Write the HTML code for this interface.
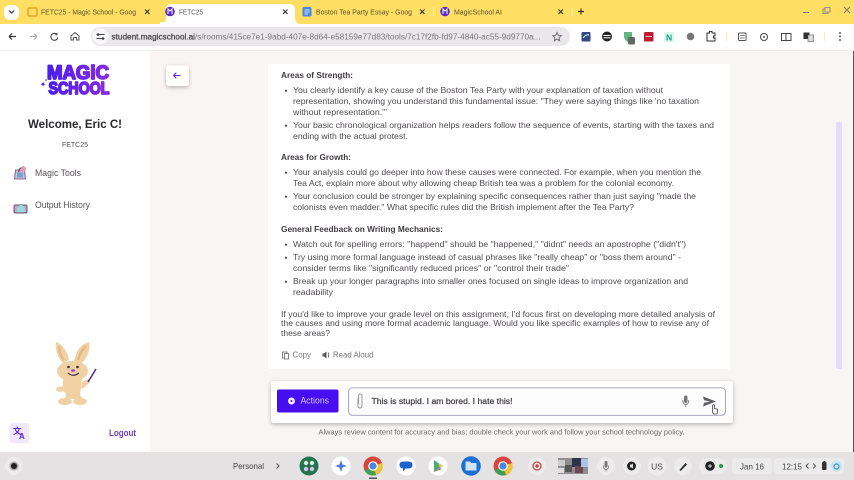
<!DOCTYPE html>
<html><head><meta charset="utf-8"><style>
html,body{margin:0;padding:0;width:854px;height:480px;overflow:hidden;background:#f9f5f4}
svg{position:absolute;left:0;top:0}
text{font-family:"Liberation Sans",sans-serif}
.b{font-size:8.6px;fill:#4f4b51}
.h{font-size:8.6px;font-weight:bold;fill:#3f3b41}
.t{font-size:7.4px;fill:#5a5030}
.u{font-size:8.6px;fill:#77757a}
</style></head><body>
<svg width="854" height="480" viewBox="0 0 854 480">
<defs>
<filter id="s" x="-10%" y="-30%" width="120%" height="170%"><feDropShadow dx="0" dy="1.5" stdDeviation="2" flood-color="#000" flood-opacity=".28"/></filter>
<filter id="bl"><feGaussianBlur stdDeviation=".35"/></filter>
<filter id="all" x="0" y="0" width="100%" height="100%"><feGaussianBlur stdDeviation=".28"/></filter>
<linearGradient id="lg" x1="0" y1="0" x2="1" y2="0"><stop offset="0" stop-color="#4a1df0"/><stop offset="1" stop-color="#8a2be2"/></linearGradient>
</defs>
<g filter="url(#all)">
<!-- page base -->
<rect width="854" height="480" fill="#f9f5f4"/>
<!-- tab strip -->
<rect width="854" height="24" fill="#fedf63"/>
<rect x="4" y="5" width="15" height="15" rx="6" fill="#fff"/>
<path d="M9 10.5l2.5 2.5 2.5-2.500" fill="none" stroke="#333" stroke-width="1.2"/>
<rect x="28" y="8" width="9" height="8" rx="1.5" fill="none" stroke="#e3a51e" stroke-width="1.5"/>
<text x="41" y="14.5" class="t" textLength="95" lengthAdjust="spacingAndGlyphs">FETC25 - Magic School - Goog</text>
<path d="M145 9.5l4.500 4.500m0-4.500l-4.500 4.500" stroke="#333" stroke-width="1.100"/>
<path d="M160 24q6 0 6-6v-8q0-6 6-6h117q6 0 6 6v8q0 6 6 6z" fill="#fff"/>
<circle cx="170" cy="11.500" r="4.800" fill="#5b2bc4"/>
<path d="M168 14v-5l2 2 2-2v5" fill="none" stroke="#fff" stroke-width="1"/>
<text x="179" y="14.500" class="t" textLength="24" lengthAdjust="spacingAndGlyphs" style="fill:#555">FETC25</text>
<path d="M283 9.500l4.500 4.500m0-4.500l-4.500 4.500" stroke="#333" stroke-width="1.100"/>
<rect x="302.500" y="7" width="9" height="9.500" rx="1.500" fill="#4b86e0"/>
<path d="M304.500 10h5M304.500 12h5M304.500 14h3.500" stroke="#fff" stroke-width=".8"/>
<text x="316" y="14.500" class="t" textLength="96" lengthAdjust="spacingAndGlyphs">Boston Tea Party Essay - Goog</text>
<path d="M420 9.500l4.500 4.500m0-4.500l-4.500 4.500" stroke="#333" stroke-width="1.100"/>
<rect x="433" y="7" width="1" height="9" fill="#fff3b0"/>
<circle cx="445" cy="11.500" r="4.800" fill="#5b2bc4"/>
<path d="M443 14v-5l2 2 2-2v5" fill="none" stroke="#fff" stroke-width="1"/>
<text x="454" y="14.500" class="t" textLength="48" lengthAdjust="spacingAndGlyphs">MagicSchool AI</text>
<path d="M558.500 9.500l4.500 4.500m0-4.500l-4.500 4.500" stroke="#333" stroke-width="1.100"/>
<rect x="572" y="7" width="1" height="9" fill="#fff3b0"/>
<path d="M581 8.500v6M578 11.500h6" stroke="#333" stroke-width="1.200"/>
<path d="M803 12.500h6" stroke="#777" stroke-width="1"/>
<rect x="823" y="9" width="5" height="4.500" fill="none" stroke="#888" stroke-width=".9"/>
<rect x="825" y="7.500" width="5" height="4.500" fill="#fedf63" stroke="#888" stroke-width=".9"/>
<path d="M844 7l6 6m0-6l-6 6" stroke="#777" stroke-width="1"/>
<!-- toolbar -->
<rect y="24" width="854" height="26" fill="#fff"/>
<rect x="160" y="22" width="135" height="4" fill="#fff"/>
<path d="M9 36.500h7M9 36.500l3-3M9 36.500l3 3" fill="none" stroke="#333" stroke-width="1.200"/>
<path d="M30 36.500h7M37 36.500l-3-3M37 36.500l-3 3" fill="none" stroke="#aaa" stroke-width="1.100"/>
<path d="M57 34.500a3.500 3.500 0 1 0 .8 3" fill="none" stroke="#444" stroke-width="1.100"/><path d="M57.500 32.500v2.700h-2.700" fill="#444"/>
<path d="M71 36l4-3.500 4 3.500v4h-2.500v-2.500h-3v2.500H71z" fill="none" stroke="#555" stroke-width="1"/>
<rect x="91" y="27" width="479" height="19" rx="9.500" fill="#e9e7ea"/>
<rect x="92.500" y="28.500" width="16" height="16" rx="8" fill="#f7f6f7"/>
<path d="M96.500 34.500h8M96.500 38.500h8" stroke="#444" stroke-width="1"/>
<circle cx="98" cy="34.500" r="1.300" fill="#444"/><circle cx="103" cy="38.500" r="1.300" fill="#444"/>
<text x="111.500" y="39.500" font-size="8.600" fill="#777" textLength="429" lengthAdjust="spacingAndGlyphs"><tspan fill="#444" stroke="#444" stroke-width=".25">student.magicschool.ai</tspan>/s/rooms/415ce7e1-9abd-407e-8d64-e58159e77d83/tools/7c17f2fb-fd97-4840-ac55-9d9770a...</text>
<path d="M557 32.500l1.300 2.800 3 .4-2.200 2 .6 3-2.700-1.500-2.700 1.500.6-3-2.200-2 3-.4z" fill="none" stroke="#666" stroke-width=".9"/>
<rect x="581.500" y="32" width="9" height="9.500" rx="1" fill="#34497f"/><path d="M583 38q3-4 6-3" stroke="#cfe" stroke-width="1.200" fill="none"/>
<circle cx="607" cy="36.500" r="5" fill="#222"/><rect x="603.500" y="35" width="7" height="1" fill="#fff"/><rect x="603.500" y="37.300" width="7" height="1" fill="#fff"/>
<path d="M624 32h8v5q-2 4-4 5-3-1-4-5z" fill="#64b581"/><rect x="628" y="37" width="7" height="7.500" rx="1.500" fill="#666"/>
<rect x="644" y="32" width="9.500" height="9.500" rx="1" fill="#c21f33"/><rect x="645.500" y="36" width="6.500" height="1" fill="#f3b9c0"/>
<rect x="664" y="32" width="10" height="10" fill="#dcf7ee"/><text x="666" y="40.500" font-size="8.500" font-weight="bold" fill="#11a586">N</text>
<circle cx="690.500" cy="36.500" r="3.800" fill="#777"/>
<path d="M707 33h2.500v-1.500h2.500V33h3v3h-1.500v2H715v3h-8z" fill="none" stroke="#333" stroke-width="1"/>
<rect x="726" y="32" width="1" height="9" fill="#fdeea8"/>
<rect x="738.500" y="33" width="7.500" height="7.500" rx="1" fill="none" stroke="#555" stroke-width="1"/><path d="M740 35.500h4.500M740 38h4.500" stroke="#555" stroke-width=".7"/>
<circle cx="764" cy="37" r="3.500" fill="none" stroke="#444" stroke-width="1"/><circle cx="764" cy="37" r="1" fill="#444"/>
<path d="M781.500 33.500h4.500v7h-4.500zM786 33.500h5v7h-5z" fill="none" stroke="#444" stroke-width="1"/>
<rect x="803.500" y="32.500" width="6" height="6.500" fill="#333"/><rect x="808" y="35" width="5.500" height="6.500" fill="#ddd" stroke="#555" stroke-width=".6"/>
<rect x="824" y="32" width="1" height="9" fill="#fdeea8"/>
<circle cx="840" cy="33" r=".9" fill="#333"/><circle cx="840" cy="36.500" r=".9" fill="#333"/><circle cx="840" cy="40" r=".9" fill="#333"/>
<rect y="50" width="854" height="1" fill="#eee"/>
<!-- sidebar -->
<rect y="51" width="150" height="401" fill="#fff"/>
<rect x="853" y="51" width="1" height="401" fill="#555"/>
<!-- logo -->
<text x="47" y="79" font-size="19" font-weight="bold" fill="url(#lg)" stroke="url(#lg)" stroke-width="1.700" stroke-linejoin="round" textLength="62" lengthAdjust="spacingAndGlyphs">MAGiC</text>
<text x="48.500" y="94" font-size="17.500" font-weight="bold" fill="url(#lg)" stroke="url(#lg)" stroke-width="1.700" stroke-linejoin="round" textLength="61" lengthAdjust="spacingAndGlyphs">SCHOOL</text>
<path d="M43 82l1 1.500 1.500.7-1.500.7-1 1.500-.8-1.500-1.500-.7 1.500-.7z" fill="#4a1df0"/><circle cx="46" cy="80" r=".8" fill="#4a1df0"/>
<text x="75" y="128" text-anchor="middle" font-size="11.800" font-weight="bold" fill="#2c292f" textLength="94" lengthAdjust="spacingAndGlyphs">Welcome, Eric C!</text>
<text x="75" y="147" text-anchor="middle" font-size="7.500" fill="#555" textLength="26" lengthAdjust="spacingAndGlyphs">FETC25</text>
<path d="M15.500 170h9l1 9h-11z" fill="#d7b6d8" stroke="#6a4f86" stroke-width=".8"/><path d="M18.500 172l1-3 4-2.500" stroke="#555" stroke-width="1.200" fill="none"/><circle cx="23.500" cy="169" r="2.600" fill="#e79ab8"/><rect x="17" y="172.500" width="6" height="5" fill="#6fa9c8"/>
<text x="35" y="176" font-size="8.800" fill="#57535a" textLength="46" lengthAdjust="spacingAndGlyphs">Magic Tools</text>
<rect x="14" y="205" width="13" height="8" rx="1.500" fill="#c7a4c8" stroke="#5d5266" stroke-width="1"/><path d="M17 212q0-7 4-7t4 7z" fill="#97dbe0"/>
<text x="35" y="208" font-size="8.800" fill="#57535a" textLength="55" lengthAdjust="spacingAndGlyphs">Output History</text>
<!-- bunny -->
<g fill="#f1d0a4">
<path d="M57 342q-2 0-1 6 1 9 7 15l6-3q-2-12-12-18z"/>
<path d="M89 342q-8 2-12 10l-3 9 7 3q6-6 8-13 1-6 0-9z"/>
<ellipse cx="72.500" cy="371" rx="15.500" ry="10"/>
<path d="M63 378h19l-2 17 3 4h-18l1-5-3-4z"/>
<path d="M82 382l6-3 2 3-6 6-3 1z"/><path d="M65 386l-8 1-1 3 3 2 7-1z"/>
<ellipse cx="65" cy="401.500" rx="7" ry="3.500"/><ellipse cx="80" cy="401.500" rx="7" ry="3.500"/>
</g>
<path d="M59 346q0 8 5 14M86 346q-5 4-8 14" stroke="#e5bb85" stroke-width="2.500" fill="none"/>
<circle cx="68.500" cy="367" r="1.300" fill="#333"/><circle cx="77.500" cy="367" r="1.300" fill="#333"/>
<ellipse cx="73" cy="370.500" rx="2" ry="1.300" fill="#a03cd2"/>
<path d="M68 373q5 4.500 11 0" stroke="#3a2a4a" stroke-width="1.100" fill="none"/>
<path d="M88 382l8-13" stroke="#4a2a9a" stroke-width="1.500"/>
<!-- lang + logout -->
<rect x="9.500" y="423" width="19.500" height="20" rx="2" fill="#f2e8fd"/>
<text x="13" y="434" font-size="8.500" fill="#5a2bc8" font-weight="bold" style="font-family:'Liberation Sans','Noto Sans CJK SC',sans-serif">文</text><text x="19" y="439" font-size="8" font-weight="bold" fill="#5a2bc8">A</text>
<text x="109" y="436" font-size="8.800" font-weight="bold" fill="#6b3fc4" textLength="27" lengthAdjust="spacingAndGlyphs">Logout</text>
<!-- back button -->
<rect x="166" y="65.500" width="23" height="20.500" rx="3" fill="#fff" filter="url(#s)"/>
<path d="M173.500 75.500h7M173.500 75.500l2.800-2.800M173.500 75.500l2.800 2.800" fill="none" stroke="#5b2bc4" stroke-width="1.100"/>
<!-- scrollbar -->
<rect x="836" y="122" width="6" height="247" rx="2" fill="#e5dcfb"/>
<!-- chat card -->
<rect x="268" y="64" width="462" height="305" rx="2" fill="#fff"/>
<text x="281" y="78" class="h" textLength="72" lengthAdjust="spacingAndGlyphs">Areas of Strength:</text>
<circle cx="286" cy="90.700" r="1.100" fill="#444"/>
<text x="293" y="93" class="b" textLength="370" lengthAdjust="spacingAndGlyphs">You clearly identify a key cause of the Boston Tea Party with your explanation of taxation without</text>
<text x="293" y="104" class="b" textLength="406" lengthAdjust="spacingAndGlyphs">representation, showing you understand this fundamental issue: "They were saying things like 'no taxation</text>
<text x="293" y="115" class="b" textLength="94" lengthAdjust="spacingAndGlyphs">without representation.'"</text>
<circle cx="286" cy="125.700" r="1.100" fill="#444"/>
<text x="293" y="128" class="b" textLength="421" lengthAdjust="spacingAndGlyphs">Your basic chronological organization helps readers follow the sequence of events, starting with the taxes and</text>
<text x="293" y="139" class="b" textLength="115" lengthAdjust="spacingAndGlyphs">ending with the actual protest.</text>
<text x="281" y="160" class="h" textLength="70" lengthAdjust="spacingAndGlyphs">Areas for Growth:</text>
<circle cx="286" cy="172.700" r="1.100" fill="#444"/>
<text x="293" y="175" class="b" textLength="408" lengthAdjust="spacingAndGlyphs">Your analysis could go deeper into how these causes were connected. For example, when you mention the</text>
<text x="293" y="186" class="b" textLength="381" lengthAdjust="spacingAndGlyphs">Tea Act, explain more about why allowing cheap British tea was a problem for the colonial economy.</text>
<circle cx="286" cy="196.700" r="1.100" fill="#444"/>
<text x="293" y="199" class="b" textLength="403" lengthAdjust="spacingAndGlyphs">Your conclusion could be stronger by explaining specific consequences rather than just saying "made the</text>
<text x="293" y="210" class="b" textLength="341" lengthAdjust="spacingAndGlyphs">colonists even madder." What specific rules did the British implement after the Tea Party?</text>
<text x="281" y="232" class="h" textLength="162" lengthAdjust="spacingAndGlyphs">General Feedback on Writing Mechanics:</text>
<circle cx="286" cy="244.700" r="1.100" fill="#444"/>
<text x="293" y="247" class="b" textLength="393" lengthAdjust="spacingAndGlyphs">Watch out for spelling errors: "happend" should be "happened," "didnt" needs an apostrophe ("didn't")</text>
<circle cx="286" cy="257.700" r="1.100" fill="#444"/>
<text x="293" y="260" class="b" textLength="388" lengthAdjust="spacingAndGlyphs">Try using more formal language instead of casual phrases like "really cheap" or "boss them around" -</text>
<text x="293" y="271" class="b" textLength="276" lengthAdjust="spacingAndGlyphs">consider terms like "significantly reduced prices" or "control their trade"</text>
<circle cx="286" cy="281.700" r="1.100" fill="#444"/>
<text x="293" y="284" class="b" textLength="395" lengthAdjust="spacingAndGlyphs">Break up your longer paragraphs into smaller ones focused on single ideas to improve organization and</text>
<text x="293" y="295" class="b" textLength="40" lengthAdjust="spacingAndGlyphs">readability</text>
<text x="281" y="317" class="b" textLength="434" lengthAdjust="spacingAndGlyphs">If you'd like to improve your grade level on this assignment, I'd focus first on developing more detailed analysis of</text>
<text x="281" y="326" class="b" textLength="428" lengthAdjust="spacingAndGlyphs">the causes and using more formal academic language. Would you like specific examples of how to revise any of</text>
<text x="281" y="336" class="b" textLength="49" lengthAdjust="spacingAndGlyphs">these areas?</text>
<rect x="282.500" y="352" width="4.500" height="6" fill="none" stroke="#777" stroke-width=".9"/><rect x="284.500" y="353.500" width="4" height="5.500" fill="#fff" stroke="#777" stroke-width=".9"/>
<text x="292.500" y="357.500" class="u" textLength="18.500" lengthAdjust="spacingAndGlyphs">Copy</text>
<path d="M322.500 353.500h1.500l2.500-2v7l-2.500-2h-1.500z" fill="#555"/><path d="M328 352.500q1.500 2.500 0 5" stroke="#555" fill="none" stroke-width=".8"/>
<text x="333" y="357.500" class="u" textLength="40.500" lengthAdjust="spacingAndGlyphs">Read Aloud</text>
<!-- input bar -->
<rect x="271" y="381" width="462" height="42" rx="3" fill="#fff" filter="url(#s)"/>
<rect x="277" y="389.500" width="61.500" height="23" rx="2" fill="#4511f0"/>
<circle cx="291.500" cy="401" r="3.500" fill="#f3e9fb"/><circle cx="291.500" cy="401" r="1" fill="#4511f0"/>
<text x="300.500" y="403.500" font-size="8.800" fill="#d3c4f8" textLength="28.500" lengthAdjust="spacingAndGlyphs">Actions</text>
<rect x="348.500" y="387.800" width="377" height="27.500" rx="4" fill="#fdfcfd" stroke="#a49bb9" stroke-width=".9"/>
<path d="M358 398v7q0 3 2 3t2-3v-9q0-2-1.800-2t-1.600 2v8" fill="none" stroke="#9a979d" stroke-width="1"/>
<text x="371.500" y="404" font-size="8.700" fill="#46424a" stroke="#46424a" stroke-width=".25" textLength="141" lengthAdjust="spacingAndGlyphs">This is stupid. I am bored. I hate this!</text>
<rect x="684" y="395.500" width="3.500" height="7.500" rx="1.700" fill="#77747a"/><path d="M682.800 400q0 4.500 3 4.500t3-4.500M685.800 404.500v2.500" fill="none" stroke="#77747a" stroke-width=".9"/>
<path d="M703 396.500l13 5-13 5 1-3.800 6-1.200-6-1.200z" fill="#615e63"/>
<path d="M712.500 412v-6q0-1.200 1-1.200t1 1.200v2.500l3 .7v3q0 1.800-2 1.800h-1.500q-1 0-1.500-2z" fill="#fff" stroke="#444" stroke-width=".8"/>
<text x="501.500" y="434.500" text-anchor="middle" font-size="7.300" fill="#6f6c72" textLength="366" lengthAdjust="spacingAndGlyphs">Always review content for accuracy and bias; double check your work and follow your school technology policy.</text>
<!-- shelf -->
<rect y="452" width="854" height="28" fill="#e5e2e4"/>
<circle cx="14" cy="466" r="9" fill="#ecebec"/><circle cx="14" cy="466" r="4.500" fill="#aaa"/><circle cx="14" cy="466" r="3" fill="#222"/>
<text x="233" y="469" font-size="8.500" fill="#444" textLength="31" lengthAdjust="spacingAndGlyphs">Personal</text>
<path d="M276.500 463.500l2.500 2.500-2.500 2.500" fill="none" stroke="#555"/>
<circle cx="309" cy="466" r="9.500" fill="#20734f"/><circle cx="306" cy="463" r="2.200" fill="#d8efe2"/><circle cx="312" cy="463" r="2.200" fill="#d8efe2"/><circle cx="306" cy="469" r="2.200" fill="#d6c3e8"/><circle cx="312" cy="469" r="2.200" fill="#d6c3e8"/>
<circle cx="341" cy="466" r="9.500" fill="#fff"/><path d="M341 460l1.500 4.500 4.500 1.500-4.500 1.500-1.500 4.500-1.500-4.500-4.500-1.500 4.500-1.500z" fill="#4f79d8"/>
<circle cx="373" cy="466" r="9.500" fill="#d8453a"/><path d="M373 466L364.500 470.500A9.500 9.500 0 0 0 376 475z" fill="#3f9f55"/><path d="M373 466l9-3a9.500 9.500 0 0 1-6 12z" fill="#f2c230"/><circle cx="373" cy="466" r="4.800" fill="#fff"/><circle cx="373" cy="466" r="3.600" fill="#4a86e0"/>
<rect x="369" y="477.500" width="8" height="1.500" fill="#555"/>
<circle cx="406" cy="466" r="9.500" fill="#fff"/><path d="M399.500 465q0-3.500 4-3.500h5q4 0 4 3.500t-4 3.500h-3l-2.500 3v-3q-3.500-.3-3.500-3.500z" fill="#1f62d0"/>
<circle cx="438" cy="466" r="9.500" fill="#fff"/><path d="M434 460l9 6-9 6z" fill="#3fa8e0"/><path d="M434 460l5 6-5 6z" fill="#4cb05f"/><path d="M438 463l5 3-3 2z" fill="#f4c02f"/><path d="M434 472l6-4 1.500 1z" fill="#dd4f44"/>
<circle cx="471" cy="466" r="9.800" fill="#1a6fd1"/><path d="M465.500 461.500h4.500l1.500 1.500h5v7.500h-11z" fill="#cfe3fa"/>
<circle cx="503" cy="466" r="9.500" fill="#d8453a"/><path d="M503 466L494.500 470.500A9.500 9.500 0 0 0 506 475z" fill="#3f9f55"/><path d="M503 466l9-3a9.500 9.500 0 0 1-6 12z" fill="#f2c230"/><circle cx="503" cy="466" r="4.800" fill="#fff"/><circle cx="503" cy="466" r="3.600" fill="#4a86e0"/>
<circle cx="537" cy="466" r="9" fill="#ecebec"/><circle cx="537" cy="466" r="4" fill="none" stroke="#c9473f" stroke-width="1.300"/><circle cx="537" cy="466" r="1.700" fill="#c9473f"/>
<g>
<rect x="558" y="458" width="30" height="16" fill="#8f8d92"/>
<rect x="558" y="460" width="7" height="6" fill="#ccc"/><rect x="565" y="465" width="7" height="7" fill="#555"/><rect x="572" y="458" width="9" height="9" fill="#2f3345"/><rect x="575" y="466" width="8" height="7" fill="#6a4a55"/><rect x="581" y="459" width="7" height="8" fill="#a9c5e6"/><rect x="558" y="468" width="6" height="5" fill="#ddd"/>
</g>
<circle cx="606" cy="466" r="9" fill="#ecebec"/><rect x="604.500" y="461" width="3" height="6.500" rx="1.500" fill="#777"/><path d="M603.300 465.500q0 4 2.700 4t2.700-4M606 469.500v2" fill="none" stroke="#777" stroke-width=".8"/>
<circle cx="632" cy="466" r="9" fill="#ecebec"/><circle cx="631.500" cy="466" r="4.500" fill="#222"/><path d="M630 464.500h1.500l1.500-1v5l-1.500-1H630z" fill="#ddd"/>
<circle cx="657" cy="466" r="9.500" fill="#ecebec"/><text x="657" y="469.500" text-anchor="middle" font-size="8.500" fill="#444">US</text>
<circle cx="683" cy="466" r="9" fill="#ecebec"/><path d="M679.500 470l6-7 1.500 1.500-6.500 6.500z" fill="#222"/>
<rect x="699" y="458" width="28" height="16" rx="8" fill="#ecebec"/><circle cx="710" cy="466" r="4.800" fill="#222"/><path d="M708 466h4M710 464v4" stroke="#ddd" stroke-width=".9"/><circle cx="721" cy="466" r="2.100" fill="#2a9a4e"/>
<rect x="732" y="458" width="40" height="16" rx="3" fill="#ecebec"/>
<text x="752" y="469.500" text-anchor="middle" font-size="8.500" fill="#444" textLength="24" lengthAdjust="spacingAndGlyphs">Jan 16</text>
<rect x="774" y="458" width="70" height="16" rx="3" fill="#ecebec"/>
<text x="782" y="469.500" font-size="8.500" fill="#444" textLength="20" lengthAdjust="spacingAndGlyphs">12:15</text>
<path d="M808.500 463.500l-2.500 2.500 2.500 2.500M813 463.500l2.500 2.500-2.500 2.500" fill="none" stroke="#444" stroke-width=".9"/>
<rect x="822" y="462" width="4.500" height="8" rx="1" fill="#333"/><rect x="823.300" y="461" width="2" height="1.200" fill="#333"/>
<circle cx="836.500" cy="466" r="5.500" fill="#bfe5f3"/><circle cx="836.500" cy="466.500" r="2.500" fill="none" stroke="#2a7fa5" stroke-width=".9"/>
</g>
</svg>
</body></html>
